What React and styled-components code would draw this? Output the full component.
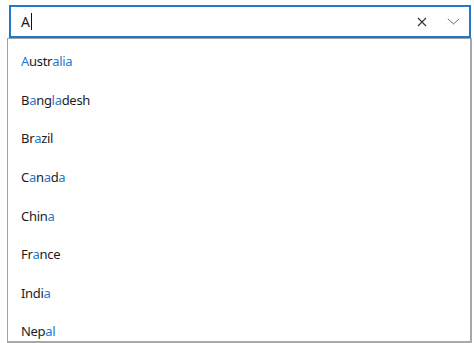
import React from "react";
import styled, { createGlobalStyle } from "styled-components";

const Global = createGlobalStyle`
  html, body { margin: 0; padding: 0; background: #ffffff; }
  body { font-family: "Noto Sans", "Open Sans", sans-serif; }
`;

const Page = styled.div`
  width: 474px;
  height: 343px;
  overflow: hidden;
  padding: 5px 0 0 7px;
  box-sizing: border-box;
  display: flex;
  flex-direction: column;
`;

const InputBox = styled.div`
  margin-left: 2px;
  width: 462px;
  height: 33px;
  box-sizing: border-box;
  border: 2px solid #1f78cc;
  display: flex;
  align-items: center;
  padding: 0 3px 0 10px;
  background: #fff;
`;

const Value = styled.div`
  font-size: 14px;
  color: #1b1b1b;
  display: flex;
  align-items: center;
  flex: 1;
`;

const Caret = styled.span`
  display: inline-block;
  width: 1px;
  height: 17px;
  background: #111;
  margin-left: 1px;
`;

const IconButton = styled.div`
  width: 26px;
  height: 26px;
  display: flex;
  align-items: center;
  justify-content: center;
  margin-left: ${(p) => p.$gap || 0}px;
`;

const Dropdown = styled.div`
  width: 465px;
  height: 305px;
  box-sizing: border-box;
  border: 1px solid #a3a3a3;
  border-right: 2px solid #a8a8a8;
  border-bottom: 2px solid #a8a8a8;
  padding-top: 3px;
  overflow: hidden;
  background: #fff;
`;

const Item = styled.div`
  height: 38.6px;
  display: flex;
  align-items: center;
  padding-left: 13px;
  font-size: 13px;
  letter-spacing: -0.3px;
  color: #1b1b1b;
`;

const Hit = styled.span`
  color: #1f78cc;
`;

const items = [
  ["", "A", "ustr", "alia"],
  ["B", "a", "ng", "la", "desh"],
  ["Br", "a", "zil"],
  ["C", "a", "n", "a", "d", "a"],
  ["Chin", "a"],
  ["Fr", "a", "nce"],
  ["Indi", "a"],
  ["Nep", "al"],
];

export default function App() {
  return (
    <>
      <Global />
      <Page>
        <InputBox>
          <Value>
            A<Caret />
          </Value>
          <IconButton>
            <svg width="10" height="10" viewBox="0 0 10 10">
              <path d="M1 1 L9 9 M9 1 L1 9" stroke="#333" strokeWidth="1.1" fill="none" />
            </svg>
          </IconButton>
          <IconButton $gap={5}>
            <svg width="13" height="7" viewBox="0 0 13 7">
              <path d="M0.8 0.8 L6.5 6 L12.2 0.8" stroke="#6a6a6a" strokeWidth="1" fill="none" />
            </svg>
          </IconButton>
        </InputBox>
        <Dropdown>
          {items.map((parts, i) => (
            <Item key={i}>
              {parts.map((p, j) =>
                j % 2 === 1 ? <Hit key={j}>{p}</Hit> : <span key={j}>{p}</span>
              )}
            </Item>
          ))}
        </Dropdown>
      </Page>
    </>
  );
}
